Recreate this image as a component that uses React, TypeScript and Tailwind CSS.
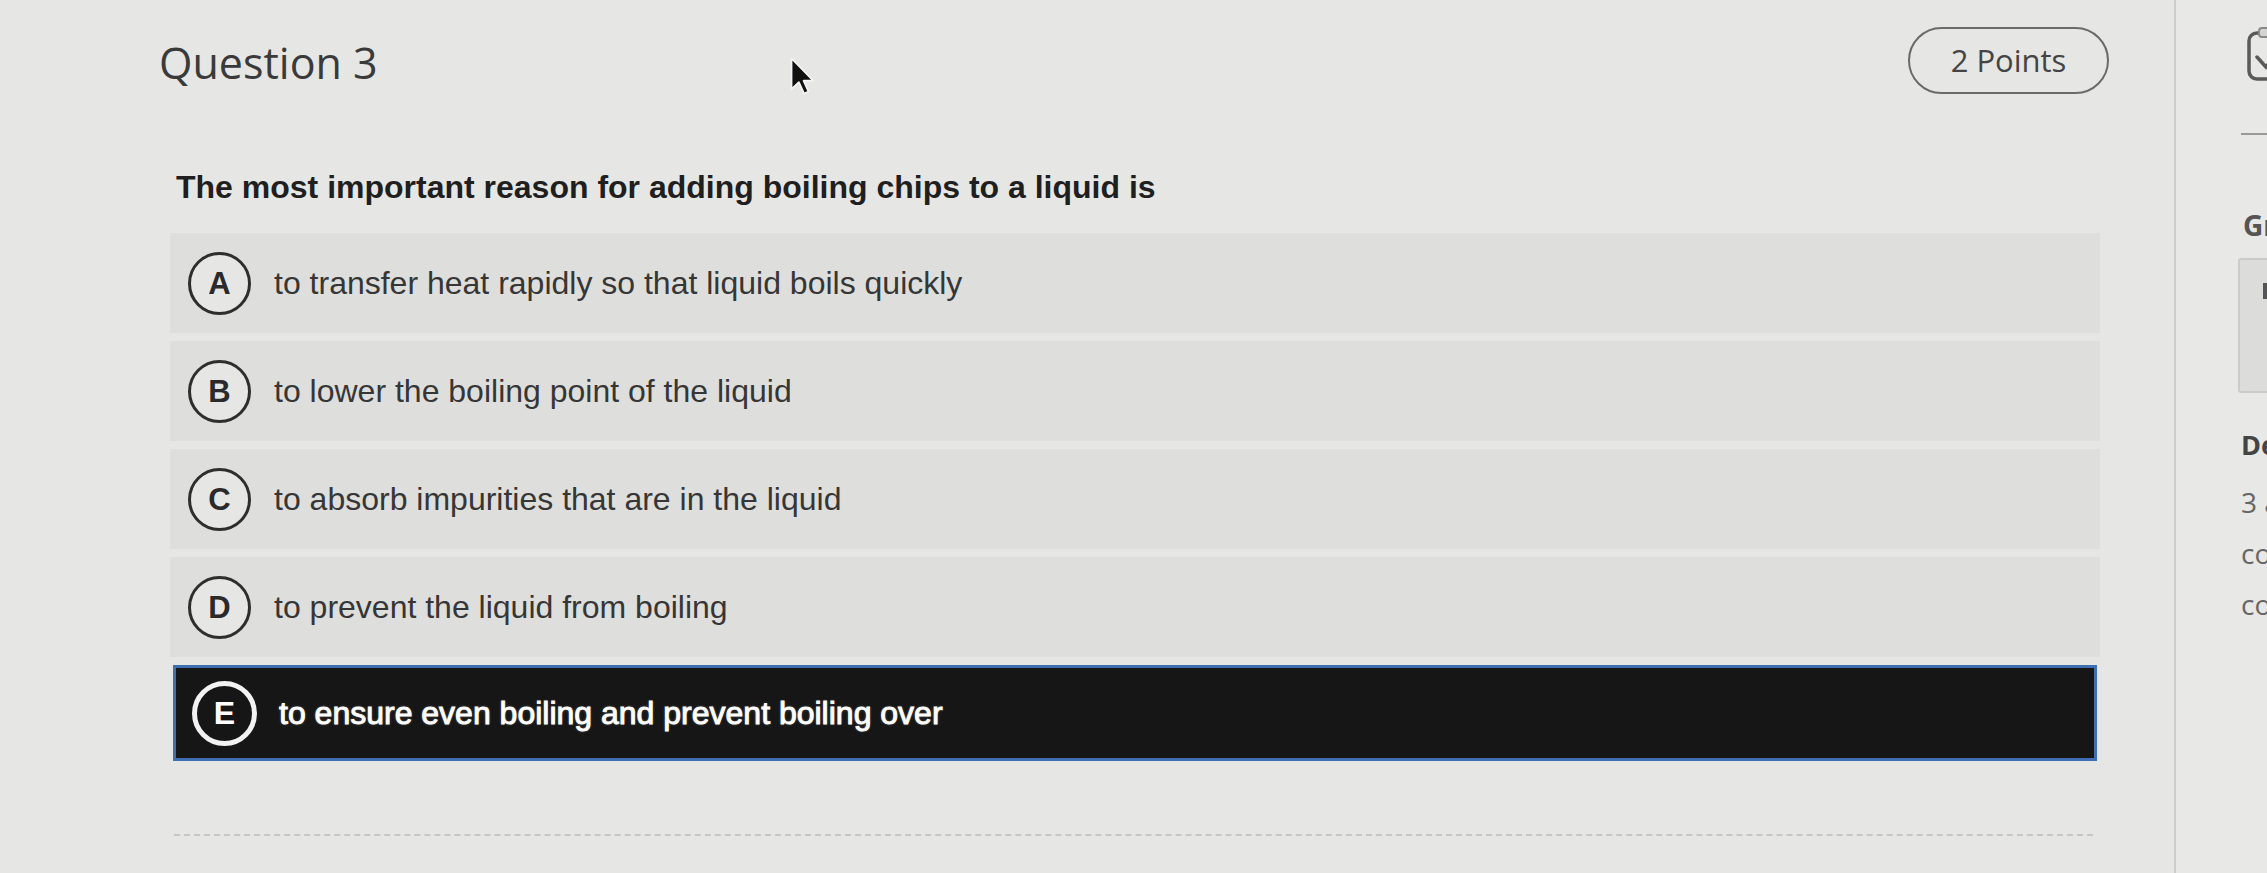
import React from "react";

type Opt = { letter: string; text: string; selected?: boolean };

const options: Opt[] = [
  { letter: "A", text: "to transfer heat rapidly so that liquid boils quickly" },
  { letter: "B", text: "to lower the boiling point of the liquid" },
  { letter: "C", text: "to absorb impurities that are in the liquid" },
  { letter: "D", text: "to prevent the liquid from boiling" },
  { letter: "E", text: "to ensure even boiling and prevent boiling over", selected: true },
];

function Cursor() {
  return (
    <svg
      className="absolute left-[790px] top-[57px]"
      width="25"
      height="38"
      viewBox="0 0 17 26"
    >
      <path
        d="M1 1 L1 22 L6 17.2 L9.6 25 L12.6 23.7 L9.2 16.2 L15.8 16.2 Z"
        fill="#111"
        stroke="#f4f4f4"
        strokeWidth="1.2"
        strokeLinejoin="round"
      />
    </svg>
  );
}

function OptionRow({ o }: { o: Opt }) {
  if (o.selected) {
    return (
      <div className="mx-[3px] h-[96px] flex items-center bg-[#161616] border-[3px] border-[#3f6fb2] pl-[16px]">
        <div className="w-[65px] h-[65px] rounded-full border-[5px] border-[#f2f2f2] flex items-center justify-center shrink-0">
          <span className="text-[32px] font-bold text-white leading-none">{o.letter}</span>
        </div>
        <span className="ml-[22px] text-[32px] text-white leading-[36px] [-webkit-text-stroke:0.9px_white] [text-shadow:0_0_3px_rgba(255,255,255,0.35)]">
          {o.text}
        </span>
      </div>
    );
  }
  return (
    <div className="h-[100px] flex items-center bg-[#dededc] pl-[18px]">
      <div className="w-[63px] h-[63px] rounded-full border-[3px] border-[#2e2e2e] bg-[#e6e6e4] flex items-center justify-center shrink-0">
        <span className="text-[31px] font-bold text-[#2a2a2a] leading-none">{o.letter}</span>
      </div>
      <span className="ml-[23px] text-[32px] text-[#363636] leading-[36px]">{o.text}</span>
    </div>
  );
}

export default function App() {
  return (
    <div className="w-[2267px] h-[873px] overflow-hidden flex bg-[#e6e6e4] relative">
      <div
        className="w-[2174px] shrink-0 relative"
        style={{ fontFamily: '"Liberation Sans", Arial, sans-serif' }}
      >
        <div className="mt-[27px] h-[67px] flex items-center justify-between pl-[159px] pr-[65px]">
          <span
            className="text-[43px] text-[#3a3a3a] leading-[67px] mt-[4px]"
            style={{ fontFamily: '"Open Sans", sans-serif' }}
          >
            Question 3
          </span>
          <div
            className="w-[201px] h-[67px] rounded-full border-2 border-[#6a6a6a] flex items-center justify-center text-[31px] text-[#444]"
            style={{ fontFamily: '"Open Sans", sans-serif' }}
          >
            2 Points
          </div>
        </div>

        <p className="mt-[75px] pl-[176px] text-[32px] font-bold text-[#1f1f1f] leading-[36px]">
          The most important reason for adding boiling chips to a liquid is
        </p>

        <div className="mt-[28px] ml-[170px] w-[1930px] flex flex-col gap-[8px]">
          {options.map((o) => (
            <OptionRow key={o.letter} o={o} />
          ))}
        </div>

        <div className="mt-[73px] ml-[174px] w-[1919px] border-t-2 border-dashed border-[#c6c6c4]" />

        <Cursor />
      </div>

      <div className="w-[2px] shrink-0 bg-[#cdcdcb]" />

      <div
        className="flex-1 overflow-hidden bg-[#e8e8e6] pl-[65px] flex flex-col"
        style={{ fontFamily: '"Open Sans", sans-serif' }}
      >
        <svg className="ml-[6px] mt-[27px] shrink-0" width="48" height="54" viewBox="0 0 48 54">
          <rect x="2" y="6" width="42" height="46" rx="8" fill="none" stroke="#5a5a5a" strokeWidth="3.5" />
          <rect x="12" y="1" width="22" height="9" rx="3" fill="#d4d4d2" stroke="#8a8a8a" strokeWidth="2" />
          <path d="M10 30 L19 40 L36 20" fill="none" stroke="#5a5a5a" strokeWidth="3.5" strokeLinecap="round" />
        </svg>
        <div className="mt-[52px] h-[2px] w-[80px] bg-[#9a9a9a] shrink-0" />
        <div className="mt-[75px] ml-[2px] text-[28px] font-bold text-[#555] leading-[30px] whitespace-nowrap">Grade</div>
        <div className="mt-[18px] -ml-[3px] h-[135px] w-[80px] shrink-0 bg-[#dcdcda] border-2 border-[#cbcbc9] rounded-[3px] pt-[23px] pl-[23px]">
          <div className="w-[4px] h-[16px] bg-[#555]" />
        </div>
        <div className="mt-[35px] text-[27px] font-bold text-[#444] leading-[34px] whitespace-nowrap">Details</div>
        <div className="mt-[15px] text-[28px] text-[#666] leading-[51px] whitespace-nowrap">
          <div>3 attempts</div>
          <div>count</div>
          <div>correct</div>
        </div>
      </div>
    </div>
  );
}
